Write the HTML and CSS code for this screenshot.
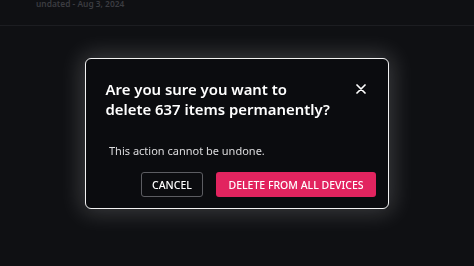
FILE: index.html
```html
<!DOCTYPE html>
<html lang="en">
<head>
<meta charset="utf-8">
<title>Delete items</title>
<link rel="stylesheet" href="styles.css">
</head>
<body>
<header class="page-header">
  <span class="meta">undated - Aug 3, 2024</span>
</header>
<main class="page-content"></main>
<div class="overlay">
  <div class="dialog" role="dialog" aria-modal="true">
    <div class="dialog-head">
      <h2 class="dialog-title">Are you sure you want to<br>delete 637 items permanently?</h2>
      <button class="close-btn" aria-label="Close">
        <svg viewBox="0 0 10 10" width="10" height="10"><path d="M1 1 L9 9 M9 1 L1 9" stroke="#fff" stroke-width="1.7" stroke-linecap="round" fill="none"/></svg>
      </button>
    </div>
    <p class="dialog-body">This action cannot be undone.</p>
    <div class="dialog-actions">
      <button class="btn btn-outline">CANCEL</button>
      <button class="btn btn-danger">DELETE FROM ALL DEVICES</button>
    </div>
  </div>
</div>
</body>
</html>
```
FILE: styles.css
```css
html, body {
  margin: 0;
  padding: 0;
  height: 100%;
}
body {
  background: #0f1013;
  font-family: "Noto Sans", "Open Sans", sans-serif;
  color: #fff;
  overflow: hidden;
}
.page-header {
  height: 26px;
  box-sizing: border-box;
  padding-left: 36px;
  border-bottom: 1px solid #1c1d21;
  display: flex;
  align-items: flex-start;
}
.meta {
  font-size: 8.4px;
  line-height: 10px;
  font-weight: 600;
  color: #3b3c41;
  margin-top: -1px;
}
.overlay {
  position: fixed;
  inset: 0;
  display: flex;
  align-items: center;
  justify-content: center;
}
.dialog {
  width: 304px;
  box-sizing: border-box;
  background: #0b0c0f;
  border: 1.5px solid #f2f2f2;
  border-radius: 6px;
  box-shadow: 0 0 22px 4px rgba(255, 255, 255, 0.18);
  padding: 20px 12px 11px 0;
  margin-top: 1px;
}
.dialog-head {
  display: flex;
  justify-content: space-between;
  align-items: flex-start;
  padding-left: 19.5px;
}
.dialog-title {
  margin: 0;
  font-size: 14.9px;
  line-height: 20px;
  font-weight: 600;
  color: #fff;
}
.close-btn {
  background: none;
  border: 0;
  padding: 0;
  margin: 5px 10px 0 0;
  width: 10px;
  height: 10px;
  display: flex;
  cursor: pointer;
}
.dialog-body {
  margin: 24px 0 0 0;
  padding-left: 23px;
  font-size: 11px;
  line-height: 16px;
  color: #dcdcde;
}
.dialog-actions {
  margin-top: 13px;
  display: flex;
  justify-content: flex-end;
  gap: 13px;
}
.btn {
  height: 24.5px;
  box-sizing: border-box;
  font-family: inherit;
  font-size: 10.5px;
  font-weight: 500;
  color: #fff;
  border-radius: 3px;
  display: flex;
  align-items: center;
  justify-content: center;
  cursor: pointer;
}
.btn-outline {
  background: transparent;
  border: 1px solid #5c5d62;
  width: 62px;
  padding: 0;
}
.btn-danger {
  background: #e2245f;
  border: 0;
  width: 160px;
  padding: 0;
}
```
